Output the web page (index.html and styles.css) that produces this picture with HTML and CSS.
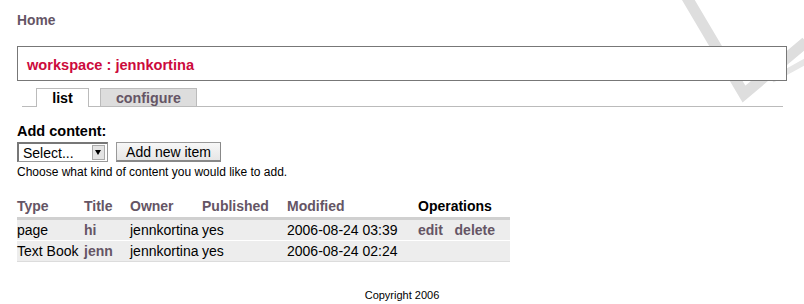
FILE: index.html
```html
<!DOCTYPE html>
<html>
<head>
<meta charset="utf-8">
<link rel="stylesheet" href="styles.css">
</head>
<body>
<svg class="deco" width="140" height="110" viewBox="0 0 140 110">
  <polyline points="10,-4 68,94 130,42" fill="none" stroke="#dedede" stroke-width="11"/>
  <polyline points="96,80 132,60" fill="none" stroke="#e6e6e6" stroke-width="6"/>
</svg>
<div class="page">
  <div class="breadcrumb"><a href="#">Home</a></div>
  <div class="titlebox"><h1>workspace : jennkortina</h1></div>
  <div class="tabs">
    <span class="tab active">list</span>
    <span class="tab">configure</span>
  </div>
  <div class="addcontent">
    <div class="label">Add content:</div>
    <div class="controls">
      <div class="select"><span>Select...</span><span class="arrow"></span></div>
      <button class="btn">Add new item</button>
    </div>
    <div class="desc">Choose what kind of content you would like to add.</div>
  </div>
  <table class="items">
    <colgroup>
      <col class="c1"><col class="c2"><col class="c3"><col class="c4"><col class="c5"><col class="c6">
    </colgroup>
    <thead>
      <tr><th>Type</th><th>Title</th><th>Owner</th><th>Published</th><th>Modified</th><th class="ops">Operations</th></tr>
    </thead>
    <tbody>
      <tr><td>page</td><td><a href="#">hi</a></td><td>jennkortina</td><td>yes</td><td>2006-08-24 03:39</td><td><a href="#">edit</a>&nbsp;&nbsp;&nbsp;<a href="#">delete</a></td></tr>
      <tr><td>Text Book</td><td><a href="#">jenn</a></td><td>jennkortina</td><td>yes</td><td>2006-08-24 02:24</td><td></td></tr>
    </tbody>
  </table>
  <div class="footer">Copyright 2006</div>
</div>
</body>
</html>
```
FILE: styles.css
```css
html, body {
  margin: 0;
  padding: 0;
  background: #fff;
}
body {
  font-family: "Liberation Sans", Arial, sans-serif;
  color: #000;
  position: relative;
  width: 804px;
  height: 304px;
  overflow: hidden;
}
.deco {
  position: absolute;
  left: 676px;
  top: 0;
}
.page {
  position: relative;
  padding: 13px 17px 0 17px;
}
a {
  color: #655565;
  text-decoration: none;
  font-weight: bold;
}
.breadcrumb {
  font-size: 13.8px;
  font-weight: bold;
  line-height: 15px;
  height: 15px;
}
.titlebox {
  margin-top: 18px;
  width: 768px;
  height: 33px;
  border: 1px solid #777;
  background: #fff;
  display: flex;
  align-items: center;
}
.titlebox h1 {
  margin: 0 0 0 9px;
  padding-top: 3px;
  font-size: 14.6px;
  font-weight: bold;
  color: #cc0a3c;
}
.tabs {
  margin: 7px 4px 0 5px;
  border-bottom: 1px solid #bbb;
  height: 18px;
  display: flex;
  padding-left: 14px;
  gap: 11px;
}
.tab {
  box-sizing: border-box;
  height: 18px;
  border: 1px solid #bbb;
  border-bottom: none;
  background: #ddd;
  color: #655565;
  font-size: 14.3px;
  font-weight: bold;
  line-height: 18px;
  padding: 0;
  width: 97px;
  text-align: center;
}
.tab.active {
  background: #fff;
  color: #000;
  width: 53px;
  height: 19px;
  margin-bottom: -1px;
}
.addcontent {
  margin-top: 16px;
}
.label {
  font-size: 14.5px;
  font-weight: bold;
  line-height: 17px;
}
.controls {
  display: flex;
  gap: 8px;
  margin-top: 2px;
  height: 20px;
}
.select {
  box-sizing: border-box;
  width: 91px;
  height: 20px;
  border-style: solid;
  border-color: #777 #999 #999 #777;
  border-width: 2px 1px 1px 2px;
  display: flex;
  align-items: center;
  justify-content: space-between;
  font-size: 14px;
  padding-left: 4px;
  padding-right: 2px;
  background: #fff;
}
.arrow {
  width: 11px;
  height: 13px;
  background: #e4e4e4;
  border: 1px solid #aaa;
  position: relative;
}
.arrow::after {
  content: "";
  position: absolute;
  left: 2px;
  top: 4px;
  border-left: 3.5px solid transparent;
  border-right: 3.5px solid transparent;
  border-top: 5px solid #000;
}
.btn {
  box-sizing: border-box;
  width: 105px;
  height: 20px;
  margin: 0;
  padding: 0;
  border: 1px solid #999;
  border-right-color: #888;
  border-bottom: 2px solid #888;
  background: linear-gradient(#f7f7f7, #e6e6e6);
  font-family: "Liberation Sans", Arial, sans-serif;
  font-size: 14px;
  color: #000;
}
.desc {
  font-size: 12px;
  line-height: 14px;
  margin-top: 3px;
}
.items {
  margin-top: 19px;
  border-collapse: collapse;
  width: 493px;
  font-size: 14px;
}
.c1 { width: 67px; }
.c2 { width: 46px; }
.c3 { width: 72px; }
.c4 { width: 85px; }
.c5 { width: 131px; }
.c6 { width: 92px; }
.items th {
  text-align: left;
  color: #655565;
  font-weight: bold;
  padding: 0;
  height: 19px;
  vertical-align: top;
  border-bottom: 3px solid #d0d0d0;
  white-space: nowrap;
}
.items th.ops {
  color: #000;
}
.items td {
  padding: 0;
  height: 20px;
  background: #ededed;
  border-bottom: 1px solid #fff;
  white-space: nowrap;
}
.items tbody tr:last-child td {
  border-bottom: 1px solid #dcdcdc;
}
.footer {
  margin-top: 27px;
  text-align: center;
  font-size: 11px;
}
```
